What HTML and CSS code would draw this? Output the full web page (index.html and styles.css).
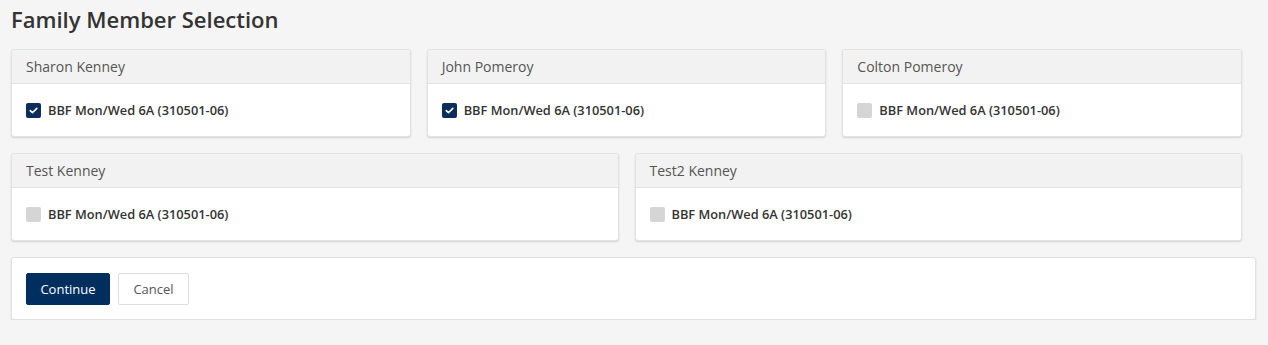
FILE: index.html
```html
<!DOCTYPE html>
<html>
<head>
<meta charset="utf-8">
<link rel="stylesheet" href="styles.css">
</head>
<body>
<div class="page">
  <h1 class="title">Family Member Selection</h1>
  <div class="row row-3">
    <div class="card">
      <div class="card-head">Sharon Kenney</div>
      <div class="card-body">
        <label class="check"><span class="box checked"><svg viewBox="0 0 15 15" width="15" height="15"><path d="M4.3 7.6 L6.5 9.7 L10.8 5.4" fill="none" stroke="#fff" stroke-width="1.6" stroke-linecap="round" stroke-linejoin="round"/></svg></span>BBF Mon/Wed 6A (310501-06)</label>
      </div>
    </div>
    <div class="card">
      <div class="card-head">John Pomeroy</div>
      <div class="card-body">
        <label class="check"><span class="box checked"><svg viewBox="0 0 15 15" width="15" height="15"><path d="M4.3 7.6 L6.5 9.7 L10.8 5.4" fill="none" stroke="#fff" stroke-width="1.6" stroke-linecap="round" stroke-linejoin="round"/></svg></span>BBF Mon/Wed 6A (310501-06)</label>
      </div>
    </div>
    <div class="card">
      <div class="card-head">Colton Pomeroy</div>
      <div class="card-body">
        <label class="check"><span class="box"></span>BBF Mon/Wed 6A (310501-06)</label>
      </div>
    </div>
  </div>
  <div class="row row-2">
    <div class="card">
      <div class="card-head">Test Kenney</div>
      <div class="card-body">
        <label class="check"><span class="box"></span>BBF Mon/Wed 6A (310501-06)</label>
      </div>
    </div>
    <div class="card">
      <div class="card-head">Test2 Kenney</div>
      <div class="card-body">
        <label class="check"><span class="box"></span>BBF Mon/Wed 6A (310501-06)</label>
      </div>
    </div>
  </div>
  <div class="actions">
    <button class="btn btn-primary">Continue</button>
    <button class="btn btn-default">Cancel</button>
  </div>
</div>
</body>
</html>
```

FILE: styles.css
```css
html, body {
  margin: 0;
  padding: 0;
  background: #f5f5f5;
  font-family: "Open Sans", "Liberation Sans", sans-serif;
  color: #333;
}

.page {
  padding: 4px 12px 0 11px;
}

.title {
  margin: 0 0 14px;
  font-size: 22px;
  line-height: 31px;
  font-weight: 600;
  color: #333;
}

.row {
  display: grid;
  gap: 16px;
  margin-right: 14px;
  margin-bottom: 16px;
}

.row-3 {
  grid-template-columns: repeat(3, 1fr);
}

.row-2 {
  grid-template-columns: repeat(2, 1fr);
}

.card {
  background: #fff;
  border: 1px solid #e2e2e2;
  border-radius: 3px;
  box-shadow: 0 1px 2px rgba(0, 0, 0, 0.14);
  overflow: hidden;
}

.card-head {
  height: 33px;
  line-height: 34px;
  padding: 0 14px;
  background: #f2f2f2;
  border-bottom: 1px solid #e4e4e4;
  font-size: 14px;
  color: #555;
}

.card-body {
  height: 52px;
  display: flex;
  align-items: center;
  padding: 0 14px;
}

.check {
  display: flex;
  align-items: center;
  gap: 7px;
  font-size: 12.8px;
  font-weight: 600;
  color: #333;
}

.box {
  width: 15px;
  height: 15px;
  border-radius: 2px;
  background: #d5d5d5;
  display: block;
}

.box.checked {
  background: #0d2e5a;
}

.box svg {
  display: block;
}

.actions {
  background: #fff;
  border: 1px solid #e2e2e2;
  border-radius: 3px;
  box-shadow: 0 1px 2px rgba(0, 0, 0, 0.14);
  height: 61px;
  display: flex;
  align-items: center;
  gap: 8px;
  padding: 0 14px;
}

.btn {
  height: 32px;
  font-family: "Open Sans", "Liberation Sans", sans-serif;
  font-size: 13px;
  border-radius: 2px;
  padding: 0;
  text-align: center;
  cursor: pointer;
}

.btn-primary {
  width: 84px;
  background: #002f5f;
  border: 1px solid #002f5f;
  color: #fff;
}

.btn-default {
  width: 71px;
  background: #fff;
  border: 1px solid #dedede;
  color: #555;
}
```
